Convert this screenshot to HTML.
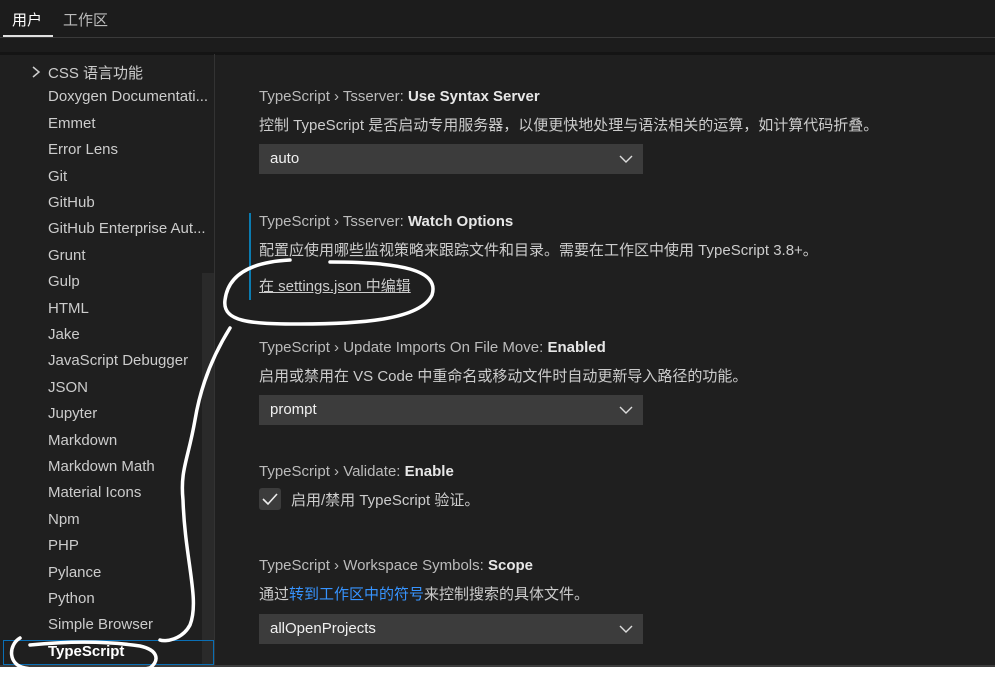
<!DOCTYPE html>
<html><head><meta charset="utf-8"><style>
*{margin:0;padding:0;box-sizing:border-box}
body{width:995px;height:680px;background:#1f1f1f;font-family:"Liberation Sans","Noto Sans CJK SC",sans-serif;color:#ccc;position:relative;overflow:hidden;font-size:15px}
.abs{position:absolute;white-space:nowrap}
.side div{position:absolute;left:48px;font-size:15px;color:#ccc}
.t{font-weight:normal;color:#bbb}
.t b{color:#e7e7e7}
.dd{position:absolute;left:259px;width:384px;height:30px;background:#3c3c3c;color:#f0f0f0;padding:6px 11px;font-size:15px}
.dd svg{position:absolute;right:10px;top:10px}
</style></head><body>
<div class="abs" style="left:0;top:0;width:995px;height:38px;background:#1c1c1c"></div>
<div class="abs" style="left:12px;top:9px;color:#fff;font-size:15px">用户</div>
<div class="abs" style="left:63px;top:9px;color:#bbb;font-size:15px">工作区</div>
<div class="abs" style="left:3px;top:35px;width:50px;height:2px;background:#e0e0e0"></div>
<div class="abs" style="left:0;top:37px;width:995px;height:1px;background:#3a3a3a"></div>
<div class="abs" style="left:0;top:38px;width:995px;height:15px;background:#1c1c1c"></div>
<div class="abs" style="left:0;top:52px;width:995px;height:3px;background:#141414"></div>
<div class="abs" style="left:214px;top:54px;width:1px;height:612px;background:#333"></div>
<div class="abs" style="left:202px;top:273px;width:12px;height:392px;background:#2a2a2a"></div>
<div class="side">
<svg class="abs" style="left:30px;top:65px" width="12" height="14"><path d="M3 2l6 5-6 5" stroke="#ccc" stroke-width="1.5" fill="none"/></svg>
<div style="top:62px">CSS 语言功能</div>
<div style="top:88px">Doxygen Documentati...</div>
<div style="top:115px">Emmet</div>
<div style="top:141px">Error Lens</div>
<div style="top:168px">Git</div>
<div style="top:194px">GitHub</div>
<div style="top:220px">GitHub Enterprise Aut...</div>
<div style="top:247px">Grunt</div>
<div style="top:273px">Gulp</div>
<div style="top:300px">HTML</div>
<div style="top:326px">Jake</div>
<div style="top:352px">JavaScript Debugger</div>
<div style="top:379px">JSON</div>
<div style="top:405px">Jupyter</div>
<div style="top:432px">Markdown</div>
<div style="top:458px">Markdown Math</div>
<div style="top:484px">Material Icons</div>
<div style="top:511px">Npm</div>
<div style="top:537px">PHP</div>
<div style="top:564px">Pylance</div>
<div style="top:590px">Python</div>
<div style="top:616px">Simple Browser</div>
<div style="top:643px;color:#fff;font-weight:bold">TypeScript</div>
</div>
<div class="abs" style="left:3px;top:640px;width:211px;height:25px;border:1px solid #0a6fb5"></div>

<div class="abs t" style="left:259px;top:88px">TypeScript › Tsserver: <b>Use Syntax Server</b></div>
<div class="abs" style="left:259px;top:114px">控制 TypeScript 是否启动专用服务器，以便更快地处理与语法相关的运算，如计算代码折叠。</div>
<div class="dd" style="top:144px">auto<svg width="14" height="10"><path d="M1 2l6 6 6-6" stroke="#ddd" stroke-width="1.4" fill="none"/></svg></div>

<div class="abs" style="left:249px;top:213px;width:2px;height:87px;background:#0b7bb0"></div>
<div class="abs t" style="left:259px;top:213px">TypeScript › Tsserver: <b>Watch Options</b></div>
<div class="abs" style="left:259px;top:239px">配置应使用哪些监视策略来跟踪文件和目录。需要在工作区中使用 TypeScript 3.8+。</div>
<div class="abs" style="left:259px;top:275px;text-decoration:underline;color:#ccc">在 settings.json 中编辑</div>

<div class="abs t" style="left:259px;top:339px">TypeScript › Update Imports On File Move: <b>Enabled</b></div>
<div class="abs" style="left:259px;top:365px">启用或禁用在 VS Code 中重命名或移动文件时自动更新导入路径的功能。</div>
<div class="dd" style="top:395px">prompt<svg width="14" height="10"><path d="M1 2l6 6 6-6" stroke="#ddd" stroke-width="1.4" fill="none"/></svg></div>

<div class="abs t" style="left:259px;top:463px">TypeScript › Validate: <b>Enable</b></div>
<div class="abs" style="left:259px;top:488px;width:22px;height:22px;background:#3c3c3c;border-radius:3px"><svg width="22" height="22"><path d="M4 11l5 5 9-10" stroke="#eee" stroke-width="1.6" fill="none"/></svg></div>
<div class="abs" style="left:291px;top:489px">启用/禁用 TypeScript 验证。</div>

<div class="abs t" style="left:259px;top:557px">TypeScript › Workspace Symbols: <b>Scope</b></div>
<div class="abs" style="left:259px;top:583px">通过<span style="color:#3794ff">转到工作区中的符号</span>来控制搜索的具体文件。</div>
<div class="dd" style="top:614px">allOpenProjects<svg width="14" height="10"><path d="M1 2l6 6 6-6" stroke="#ddd" stroke-width="1.4" fill="none"/></svg></div>

<div class="abs" style="left:0;top:665px;width:995px;height:2px;background:#3c3c3c"></div>
<div class="abs" style="left:0;top:667px;width:995px;height:13px;background:#fff"></div>

<svg class="abs" style="left:0;top:0" width="995" height="680">
<g stroke="#fff" stroke-width="3.5" fill="none" stroke-linecap="round">
<path d="M290 260 C250 262 228 275 225 300 C222 322 250 324 300 324 C360 324 420 320 432 295 C440 270 400 262 330 262"/>
<path d="M230 328 C210 360 200 390 195 420 C188 460 180 470 183 500 C185 560 200 600 190 625 C182 640 165 642 160 640"/>
<path d="M20 638 C8 645 8 665 25 668 C60 675 120 675 150 668 C160 660 158 650 140 646 C100 640 60 642 30 645"/>
</g></svg>
</body></html>
